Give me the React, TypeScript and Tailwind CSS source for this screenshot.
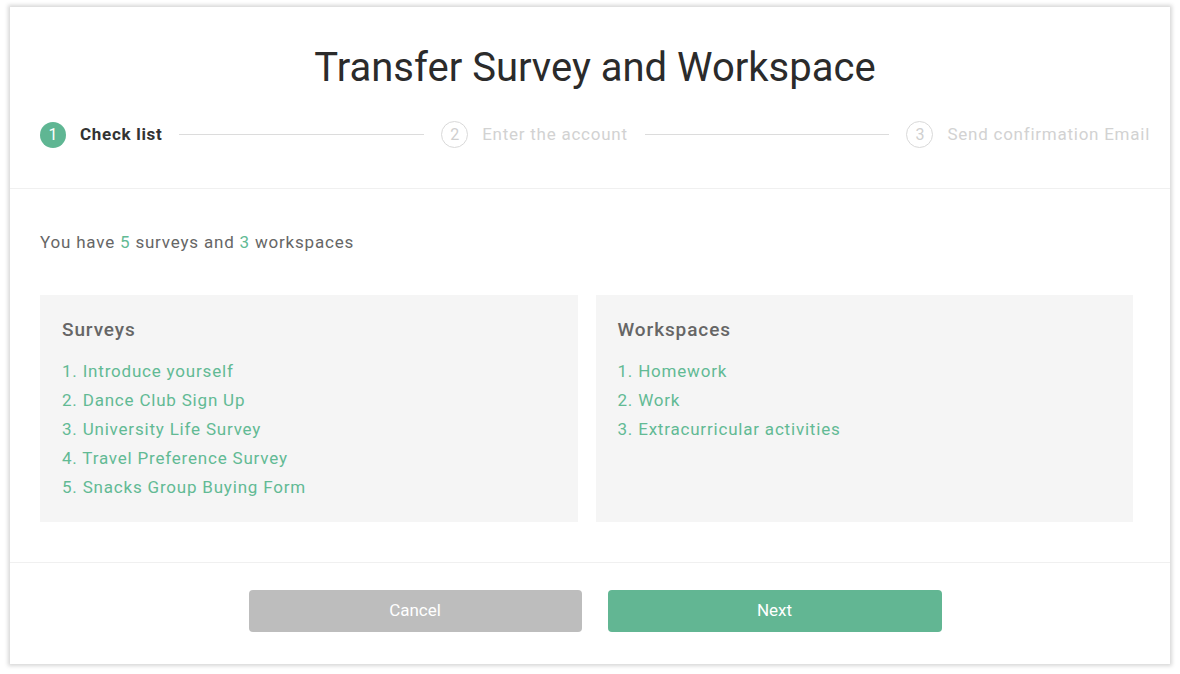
import React from "react";

const surveys = [
  "Introduce yourself",
  "Dance Club Sign Up",
  "University Life Survey",
  "Travel Preference Survey",
  "Snacks Group Buying Form",
];

const workspaces = ["Homework", "Work", "Extracurricular activities"];

const Step = ({ n, label, active }: { n: number; label: string; active?: boolean }) => (
  <div className="flex items-center gap-[14px] shrink-0">
    {active ? (
      <span className="w-[26px] h-[26px] rounded-full bg-[#5fb693] text-white text-[16px] flex items-center justify-center">
        {n}
      </span>
    ) : (
      <span className="w-[27px] h-[27px] rounded-full border border-[#d9d9d9] text-[#cfcfcf] text-[16px] flex items-center justify-center">
        {n}
      </span>
    )}
    <span
      className={
        active
          ? "text-[17px] font-bold tracking-[0.7px] text-[#333]"
          : "text-[17px] tracking-[0.75px] text-[#d2d2d2]"
      }
    >
      {label}
    </span>
  </div>
);

const ListCard = ({ title, items }: { title: string; items: string[] }) => (
  <div className="flex-1 bg-[#f5f5f5] pl-[22px] pt-[23px] pb-[20px]">
    <h3 className="text-[19px] font-medium tracking-[0.9px] text-[#666] leading-[24px]">{title}</h3>
    <ol className="mt-[15px]">
      {items.map((item, i) => (
        <li key={item} className="text-[17px] leading-[29px] tracking-[0.8px] text-[#62ba94]">
          {i + 1}. {item}
        </li>
      ))}
    </ol>
  </div>
);

export default function App() {
  return (
    <div className="w-[1180px] h-[674px] bg-white pt-[7px] pl-[10px]" style={{ fontFamily: "Roboto, 'Noto Sans', sans-serif" }}>
      <div className="w-[1160px] h-[657px] bg-white shadow-[0_0_4px_2px_rgba(0,0,0,0.16)] flex flex-col">
        {/* header */}
        <div className="pt-[37px] pb-[40px] pl-[30px] pr-[20px] border-b border-[#f0f0f0]">
          <h1 className="text-center text-[40px] leading-[48px] text-[#2b2b2b]">Transfer Survey and Workspace</h1>
          <div className="mt-[29px] flex items-center gap-[17px]">
            <Step n={1} label="Check list" active />
            <div className="flex-1 h-px bg-[#dcdcdc]" />
            <Step n={2} label="Enter the account" />
            <div className="flex-1 h-px bg-[#dcdcdc]" />
            <Step n={3} label="Send confirmation Email" />
          </div>
        </div>

        {/* body */}
        <div className="pt-[41px] pb-[40px] pl-[30px] pr-[37px] border-b border-[#f0f0f0]">
          <p className="text-[17px] leading-[24px] tracking-[0.8px] text-[#666]">
            You have <span className="text-[#62ba94]">5</span> surveys and{" "}
            <span className="text-[#62ba94]">3</span> workspaces
          </p>
          <div className="mt-[41px] flex gap-[18px]">
            <ListCard title="Surveys" items={surveys} />
            <ListCard title="Workspaces" items={workspaces} />
          </div>
        </div>

        {/* footer */}
        <div className="pt-[27px] pl-[30px] pr-[20px] flex justify-center gap-[26px]">
          <button className="w-[333px] h-[42px] rounded-[4px] bg-[#bdbdbd] text-white text-[17px]">Cancel</button>
          <button className="w-[334px] h-[42px] rounded-[4px] bg-[#62b693] text-white text-[17px]">Next</button>
        </div>
      </div>
    </div>
  );
}
